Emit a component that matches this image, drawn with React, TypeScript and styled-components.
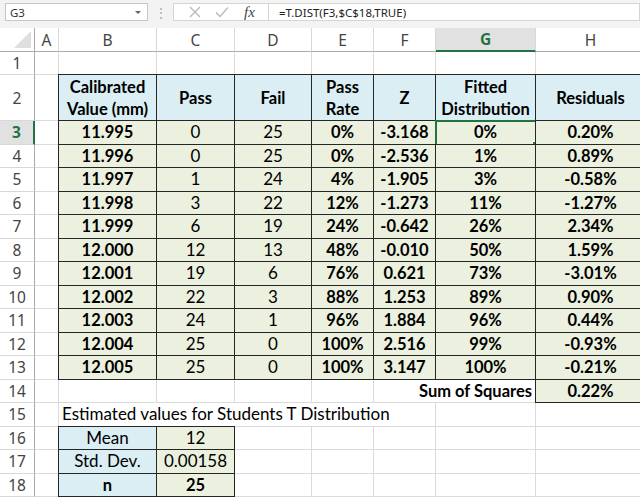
import styled, { createGlobalStyle, css } from 'styled-components';
import { Fragment } from 'react';

const GlobalStyle = createGlobalStyle`
  html, body { margin: 0; padding: 0; background: #ffffff; overflow: hidden; }
`;

type Fill = 'blue' | 'green';

interface CellDef {
  text?: React.ReactNode;
  fill?: Fill;
  bold?: boolean;
  align?: 'left' | 'center' | 'right';
  boxed?: boolean;
  span?: number;
  selected?: boolean;
}

const COLS = [35, 24, 98, 78, 77, 62, 62, 100, 110];
const LETTERS = ['A', 'B', 'C', 'D', 'E', 'F', 'G', 'H'];

const data: string[][] = [
  ['11.995', '0', '25', '0%', '-3.168', '0%', '0.20%'],
  ['11.996', '0', '25', '0%', '-2.536', '1%', '0.89%'],
  ['11.997', '1', '24', '4%', '-1.905', '3%', '-0.58%'],
  ['11.998', '3', '22', '12%', '-1.273', '11%', '-1.27%'],
  ['11.999', '6', '19', '24%', '-0.642', '26%', '2.34%'],
  ['12.000', '12', '13', '48%', '-0.010', '50%', '1.59%'],
  ['12.001', '19', '6', '76%', '0.621', '73%', '-3.01%'],
  ['12.002', '22', '3', '88%', '1.253', '89%', '0.90%'],
  ['12.003', '24', '1', '96%', '1.884', '96%', '0.44%'],
  ['12.004', '25', '0', '100%', '2.516', '99%', '-0.93%'],
  ['12.005', '25', '0', '100%', '3.147', '100%', '-0.21%'],
];

const blank = (n: number): CellDef[] => Array.from({ length: n }, () => ({}));

const head = (text: React.ReactNode): CellDef => ({ text, fill: 'blue', bold: true, boxed: true });

const rows: { h: number; cells: CellDef[] }[] = [
  { h: 23, cells: blank(8) },
  {
    h: 46,
    cells: [
      {},
      head(<>Calibrated<br />Value (mm)</>),
      head('Pass'),
      head('Fail'),
      head(<>Pass<br />Rate</>),
      head('Z'),
      head(<>Fitted<br />Distribution</>),
      head('Residuals'),
    ],
  },
  ...data.map((r, i) => ({
    h: 23.5,
    cells: [
      {},
      ...r.map((v, j) => ({
        text: v,
        fill: 'green' as Fill,
        boxed: true,
        bold: j !== 1 && j !== 2,
        selected: i === 0 && j === 5,
      })),
    ],
  })),
  {
    h: 23.5,
    cells: [
      {}, {}, {}, {}, {},
      { text: 'Sum of Squares', bold: true, align: 'right', span: 2 },
      { text: '0.22%', bold: true, fill: 'green', boxed: true },
    ],
  },
  {
    h: 23.5,
    cells: [{}, { text: 'Estimated values for Students T Distribution', align: 'left', span: 5 }, {}, {}],
  },
  {
    h: 23.5,
    cells: [{}, { text: 'Mean', fill: 'blue', boxed: true }, { text: '12', fill: 'green', boxed: true }, ...blank(5)],
  },
  {
    h: 23.5,
    cells: [{}, { text: 'Std. Dev.', fill: 'blue', boxed: true }, { text: '0.00158', fill: 'green', boxed: true }, ...blank(5)],
  },
  {
    h: 23.5,
    cells: [
      {},
      { text: 'n', fill: 'blue', boxed: true, bold: true },
      { text: '25', fill: 'green', boxed: true, bold: true },
      ...blank(5),
    ],
  },
];

const Window = styled.div`
  width: 640px;
  height: 500px;
  overflow: hidden;
  background: #ffffff;
  font-family: 'Noto Sans', 'Open Sans', sans-serif;
`;

const Toolbar = styled.div`
  height: 28px;
  box-sizing: border-box;
  padding: 3px 0 0 5px;
  display: flex;
  align-items: flex-start;
  background: #f3f3f3;
`;

const NameBox = styled.div`
  width: 143px;
  height: 18px;
  box-sizing: border-box;
  border: 1px solid #c6c6c6;
  background: #ffffff;
  display: flex;
  align-items: center;
  justify-content: space-between;
  padding: 0 6px 0 4px;
  font-size: 11.5px;
  color: #333;
`;

const Caret = styled.span`
  width: 0;
  height: 0;
  border-left: 3px solid transparent;
  border-right: 3px solid transparent;
  border-top: 3px solid #666;
`;

const Dots = styled.div`
  width: 25px;
  height: 18px;
  display: flex;
  align-items: center;
  justify-content: center;
  color: #a6a6a6;
  font-size: 12px;
`;

const FxBox = styled.div`
  width: 95px;
  height: 18px;
  box-sizing: border-box;
  border: 1px solid #d4d4d4;
  border-right: none;
  background: #ffffff;
  display: flex;
  align-items: center;
  padding-left: 14px;
  gap: 12px;
`;

const Fx = styled.span`
  font-family: 'Liberation Serif', serif;
  font-style: italic;
  font-size: 15px;
  color: #444;
  margin-left: 2px;
`;

const Formula = styled.div`
  flex: 1;
  height: 18px;
  box-sizing: border-box;
  border: 1px solid #d4d4d4;
  background: #ffffff;
  display: flex;
  align-items: center;
  padding-left: 10px;
  font-size: 11.5px;
  color: #222;
`;

const Sheet = styled.div<{ $rows: string }>`
  display: grid;
  grid-template-columns: ${COLS.map((c) => `${c}px`).join(' ')};
  grid-template-rows: 24px ${(p) => p.$rows};
`;

const Corner = styled.div`
  position: relative;
  background: #ffffff;
  border-right: 1px solid #ababab;
  border-bottom: 1px solid #ababab;
  &::after {
    content: '';
    position: absolute;
    right: 3px;
    bottom: 3px;
    width: 0;
    height: 0;
    border-left: 17px solid transparent;
    border-bottom: 17px solid #dfdfdf;
  }
`;

const ColHead = styled.div<{ $active?: boolean }>`
  display: flex;
  align-items: center;
  justify-content: center;
  font-size: 15.5px;
  color: ${(p) => (p.$active ? '#217346' : '#444')};
  font-weight: ${(p) => (p.$active ? 700 : 400)};
  background: ${(p) => (p.$active ? '#e1e1e1' : '#ffffff')};
  border-right: 1px solid #d8d8d8;
  border-bottom: ${(p) => (p.$active ? '2px solid #217346' : '1px solid #ababab')};
`;

const RowHead = styled.div<{ $active?: boolean }>`
  display: flex;
  align-items: center;
  justify-content: center;
  font-size: 15.5px;
  color: ${(p) => (p.$active ? '#217346' : '#444')};
  font-weight: ${(p) => (p.$active ? 700 : 400)};
  background: ${(p) => (p.$active ? '#e1e1e1' : '#ffffff')};
  border-right: ${(p) => (p.$active ? '2px solid #217346' : '1px solid #ababab')};
  border-bottom: 1px solid #d8d8d8;
`;

const fills: Record<Fill, string> = { blue: '#daeef3', green: '#ebf1de' };

const Cell = styled.div<{
  $fill?: Fill;
  $bold?: boolean;
  $align?: 'left' | 'center' | 'right';
  $boxed?: boolean;
  $span?: number;
}>`
  position: relative;
  display: flex;
  align-items: center;
  justify-content: ${(p) => (p.$align === 'left' ? 'flex-start' : p.$align === 'right' ? 'flex-end' : 'center')};
  text-align: center;
  padding: 0 3px;
  white-space: nowrap;
  font-family: Lato, 'Liberation Sans', sans-serif;
  font-size: ${(p) => (p.$bold ? '16.5px' : '17px')};
  line-height: 22px;
  font-weight: ${(p) => (p.$bold ? 700 : 400)};
  color: #000;
  background: ${(p) => (p.$fill ? fills[p.$fill] : '#ffffff')};
  border-right: 1px solid #dadada;
  border-bottom: 1px solid #dadada;
  grid-column: span ${(p) => p.$span ?? 1};
  ${(p) =>
    p.$boxed &&
    css`
      border: 1px solid #262626;
      margin: -1px 0 0 -1px;
    `}
`;

const Selection = styled.span`
  position: absolute;
  inset: -1px -2px -2px -1px;
  border: 2px solid #217346;
  pointer-events: none;
  &::after {
    content: '';
    position: absolute;
    right: -4px;
    bottom: -4px;
    width: 5px;
    height: 5px;
    background: #217346;
    border: 1px solid #ffffff;
  }
`;

export default function App() {
  const rowTemplate = rows.map((r) => `${r.h}px`).join(' ');
  return (
    <Window>
      <GlobalStyle />
      <Toolbar>
        <NameBox>
          G3
          <Caret />
        </NameBox>
        <Dots>⋮</Dots>
        <FxBox>
          <svg width="14" height="14" viewBox="0 0 14 14" fill="none" stroke="#b8b8b8" strokeWidth="1.3">
            <path d="M2 2 L12 12 M12 2 L2 12" />
          </svg>
          <svg width="16" height="14" viewBox="0 0 16 14" fill="none" stroke="#b8b8b8" strokeWidth="1.3">
            <path d="M2 7.5 L6 11.5 L14 2.5" />
          </svg>
          <Fx>fx</Fx>
        </FxBox>
        <Formula>=T.DIST(F3,$C$18,TRUE)</Formula>
      </Toolbar>
      <Sheet $rows={rowTemplate}>
        <Corner />
        {LETTERS.map((l) => (
          <ColHead key={l} $active={l === 'G'}>
            {l}
          </ColHead>
        ))}
        {rows.map((r, i) => (
          <Fragment key={i}>
            <RowHead $active={i + 1 === 3}>{i + 1}</RowHead>
            {r.cells.map((c, j) => (
              <Cell key={j} $fill={c.fill} $bold={c.bold} $align={c.align} $boxed={c.boxed} $span={c.span}>
                {c.text}
                {c.selected && <Selection />}
              </Cell>
            ))}
          </Fragment>
        ))}
      </Sheet>
    </Window>
  );
}
